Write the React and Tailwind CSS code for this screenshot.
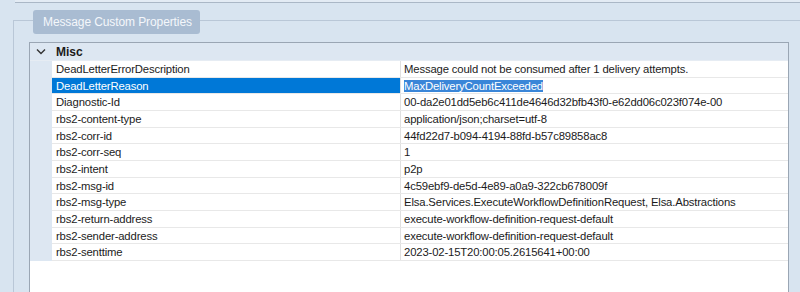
import React from "react";

const rows = [
  ["DeadLetterErrorDescription", "Message could not be consumed after 1 delivery attempts."],
  ["DeadLetterReason", "MaxDeliveryCountExceeded", true],
  ["Diagnostic-Id", "00-da2e01dd5eb6c411de4646d32bfb43f0-e62dd06c023f074e-00"],
  ["rbs2-content-type", "application/json;charset=utf-8"],
  ["rbs2-corr-id", "44fd22d7-b094-4194-88fd-b57c89858ac8"],
  ["rbs2-corr-seq", "1"],
  ["rbs2-intent", "p2p"],
  ["rbs2-msg-id", "4c59ebf9-de5d-4e89-a0a9-322cb678009f"],
  ["rbs2-msg-type", "Elsa.Services.ExecuteWorkflowDefinitionRequest, Elsa.Abstractions"],
  ["rbs2-return-address", "execute-workflow-definition-request-default"],
  ["rbs2-sender-address", "execute-workflow-definition-request-default"],
  ["rbs2-senttime", "2023-02-15T20:00:05.2615641+00:00"],
];

export default function App() {
  return (
    <div
      className="w-[800px] h-[292px] overflow-hidden bg-[#d8e4f0] text-[#1b1b1b] relative"
      style={{ fontFamily: '"Liberation Sans", Arial, sans-serif' }}
    >
      <div className="ml-[15px] h-[3px] bg-[#e3ebf4] border-b border-[#aab7c6]" />
      <div className="relative ml-[13px] mt-[17px] border-l border-t border-[#b9c7d7] h-[300px] pl-[15px] pt-[21px]">
        <div className="absolute left-[19px] top-[-11px] w-[167px] h-[24px] rounded-[3px] bg-[#a9bcd2] text-[#f4f7fb] text-[12px] tracking-[-0.1px] flex items-center pl-[10px]">
          Message Custom Properties
        </div>
        <div className="w-[760px] h-[260px] border border-[#9aa6b4] bg-white">
          <div className="flex items-center h-[18px] bg-[#dde7f2] border-b border-[#e6ecf3]">
            <div className="w-[22px] flex justify-center">
              <svg width="10" height="7" viewBox="0 0 10 7">
                <path d="M1 1.5 L5 5.5 L9 1.5" fill="none" stroke="#333" strokeWidth="1.4" />
              </svg>
            </div>
            <span className="pl-[4px] font-bold text-[12px]">Misc</span>
          </div>
          <div className="flex">
            <div className="w-[22px] bg-[#dde7f2]" />
            <div className="flex-1">
              {rows.map(([k, v, sel]) => (
                <div key={k} className="flex h-[16.67px] border-b border-[#e8e8e8] text-[11.3px] tracking-[-0.15px] leading-[16px]">
                  <div
                    className={
                      "w-[349px] pl-[4px] border-r border-[#e0e0e0] whitespace-nowrap " +
                      (sel ? "bg-[#0078d7] text-white" : "")
                    }
                  >
                    {k}
                  </div>
                  <div className="flex-1 pl-[3px] whitespace-nowrap">
                    {sel ? (
                      <span className="bg-[#3a86d8] text-white">{v}</span>
                    ) : (
                      v
                    )}
                  </div>
                </div>
              ))}
            </div>
          </div>
        </div>
      </div>
    </div>
  );
}
